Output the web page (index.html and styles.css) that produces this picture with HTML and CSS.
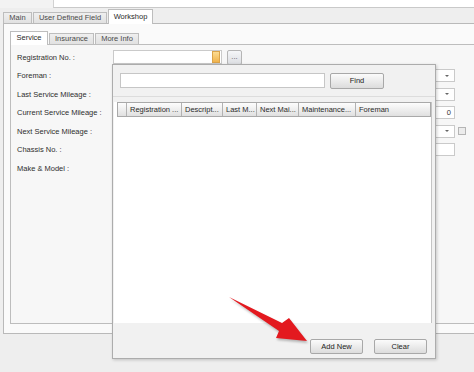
FILE: index.html
```html
<!DOCTYPE html>
<html lang="en">
<head>
    <meta charset="UTF-8">
    <title>Workshop</title>
    <link rel="stylesheet" href="styles.css">
</head>
<body>
    <!-- strip above the tabs -->
    <div class="topbar">
        <div class="topbar-left"></div>
        <div class="topbar-right"></div>
    </div>

    <!-- main tabs -->
    <div class="tabs outer-tabs">
        <div class="tab tab-main">Main</div>
        <div class="tab tab-udf">User Defined Field</div>
        <div class="tab tab-workshop active">Workshop</div>
    </div>

    <div class="outer-panel">
        <!-- sub tabs -->
        <div class="tabs inner-tabs">
            <div class="tab tab-service active">Service</div>
            <div class="tab tab-insurance">Insurance</div>
            <div class="tab tab-more">More Info</div>
        </div>

        <div class="inner-panel">
            <div class="row">
                <div class="label">Registration No. :</div>
                <div class="field field-reg"><span class="dd-btn"></span></div>
                <div class="dots-btn">...</div>
            </div>
            <div class="row">
                <div class="label">Foreman :</div>
                <div class="field wide combo"></div>
            </div>
            <div class="row">
                <div class="label">Last Service Mileage :</div>
                <div class="field wide combo"></div>
            </div>
            <div class="row">
                <div class="label">Current Service Mileage :</div>
                <div class="field wide number">0</div>
            </div>
            <div class="row">
                <div class="label">Next Service Mileage :</div>
                <div class="field wide combo"></div>
                <div class="check"></div>
            </div>
            <div class="row">
                <div class="label">Chassis No. :</div>
                <div class="field wide"></div>
            </div>
            <div class="row">
                <div class="label">Make &amp; Model :</div>
                <div class="field short"></div>
            </div>
        </div>
    </div>

    <!-- lookup popup over the form -->
    <div class="popup">
        <div class="search">
            <div class="search-box"></div>
            <div class="btn btn-find">Find</div>
        </div>
        <div class="grid">
            <div class="grid-head">
                <div class="col col-ind"></div>
                <div class="col col-reg">Registration ...</div>
                <div class="col col-desc">Descript...</div>
                <div class="col col-last">Last M...</div>
                <div class="col col-next">Next Mai...</div>
                <div class="col col-maint">Maintenance...</div>
                <div class="col col-fore">Foreman</div>
            </div>
        </div>
        <div class="popup-foot">
            <div class="btn">Add New</div>
            <div class="btn">Clear</div>
        </div>
    </div>

    <!-- red pointer arrow -->
    <svg class="arrow" width="474" height="372" viewBox="0 0 474 372">
        <polygon points="229,297 282,323 289,318 307,341 276,338 279,331" fill="#e3191f"/>
    </svg>
</body>
</html>
```

FILE: styles.css
```css
* {
    margin: 0;
    padding: 0;
    box-sizing: border-box;
}

body {
    width: 474px;
    height: 372px;
    overflow: hidden;
    position: relative;
    background: #eeeeee;
    font-family: "Liberation Sans", Arial, sans-serif;
    font-size: 7.5px;
    color: #2e2e2e;
}

/* top strip */
.topbar {
    display: flex;
    height: 8px;
}
.topbar-left {
    width: 53px;
    background: #f3f3f3;
}
.topbar-right {
    flex: 1;
    background: #fff;
    border-left: 1px solid #d2d2d2;
    border-bottom: 1px solid #c9c9c9;
}

/* tabs */
.tabs {
    display: flex;
    align-items: flex-end;
}
.tab {
    height: 11px;
    line-height: 10px;
    text-align: center;
    border: 1px solid #bdbdbd;
    border-bottom: none;
    background: linear-gradient(#efefef, #e1e1e1);
    color: #4a4a4a;
    margin-right: 1px;
}
.tab.active {
    height: 15px;
    line-height: 13px;
    background: #fff;
    color: #2a2a2a;
    margin-bottom: -1px;
    position: relative;
    z-index: 2;
}

.outer-tabs {
    height: 15px;
    padding-left: 3px;
}
.tab-main { width: 29px; }
.tab-udf { width: 74px; }
.tab-workshop { width: 45px; margin-right: 0; }

.outer-panel {
    margin-left: 3px;
    margin-right: -20px;
    height: 311px;
    border: 1px solid #b9b9b9;
    background: #fafafa;
    padding: 6px 0 0 6px;
}

.inner-tabs {
    height: 14px;
}
.inner-tabs .tab.active {
    height: 14px;
    line-height: 12px;
}
.tab-service { width: 38px; }
.tab-insurance { width: 45px; }
.tab-more { width: 44px; }

.inner-panel {
    height: 280px;
    border: 1px solid #bdbdbd;
    background: #f7f7f7;
    padding-top: 3px;
}

/* form rows */
.row {
    display: flex;
    align-items: center;
    height: 18.5px;
}
.label {
    width: 102px;
    padding-left: 6px;
    color: #2e2e2e;
}
.field {
    height: 13px;
    background: #fff;
    border: 1px solid #cacaca;
    display: flex;
    align-items: center;
    justify-content: flex-end;
}
.field.wide { width: 342px; }
.field.short { width: 200px; }
.field-reg {
    width: 109px;
    height: 14px;
    padding-right: 1px;
}
.dd-btn {
    width: 8px;
    height: 12px;
    background: linear-gradient(#fcdc92, #f0b34c);
    border: 1px solid #dba44a;
}
.dots-btn {
    margin-left: 5px;
    width: 15px;
    height: 15px;
    border: 1px solid #b5b5b5;
    border-radius: 2px;
    background: linear-gradient(#f5f6f8, #dcdee2);
    text-align: center;
    line-height: 11px;
    color: #555;
}
.combo {
    padding-right: 5px;
}
.combo::after {
    content: "";
    border-left: 2px solid transparent;
    border-right: 2px solid transparent;
    border-top: 2px solid #666;
}
.number {
    padding-right: 3px;
    color: #333;
}
.check {
    margin-left: 3px;
    width: 8px;
    height: 8px;
    border: 1px solid #b5b5b5;
    background: #ececec;
}

/* popup */
.popup {
    position: absolute;
    left: 112px;
    top: 64px;
    width: 324px;
    height: 295px;
    background: #f1f1f1;
    border: 1px solid #acacac;
    box-shadow: 1px 1px 3px rgba(0, 0, 0, 0.2);
    display: flex;
    flex-direction: column;
    z-index: 5;
}
.search {
    display: flex;
    align-items: flex-start;
    height: 32px;
    padding: 8px 0 0 7px;
    border-bottom: 1px solid #dcdcdc;
}
.search-box {
    width: 205px;
    height: 15px;
    background: #fff;
    border: 1px solid #c6c6c6;
}
.btn {
    width: 53px;
    height: 15px;
    border: 1px solid #a8a8a8;
    border-radius: 2px;
    background: linear-gradient(#fbfbfb, #dcdcdc);
    text-align: center;
    line-height: 13px;
    color: #222;
}
.btn-find {
    margin-left: 5px;
    width: 54px;
    height: 16px;
    line-height: 14px;
}

.grid {
    flex: 1;
    margin: 5px 3px 0 1px;
    background: #fff;
    border-right: 1px solid #c4c4c4;
}
.grid-head {
    display: flex;
    height: 15px;
    margin-left: 3px;
    border: 1px solid #a9a9a9;
    background: linear-gradient(#fdfdfd, #e0e0e0);
}
.col {
    border-right: 1px solid #b2b2b2;
    padding-left: 3px;
    line-height: 13px;
    white-space: nowrap;
    overflow: hidden;
    color: #2a2a2a;
}
.col-ind { width: 9px; }
.col-reg { width: 55px; }
.col-desc { width: 41px; }
.col-last { width: 34px; }
.col-next { width: 42px; }
.col-maint { width: 57px; }
.col-fore { flex: 1; border-right: none; }

.popup-foot {
    height: 35px;
    display: flex;
    justify-content: flex-end;
    align-items: flex-start;
    gap: 11px;
    padding: 16px 8px 0 0;
}

/* arrow overlay */
.arrow {
    position: absolute;
    left: 0;
    top: 0;
    z-index: 10;
    pointer-events: none;
    filter: drop-shadow(1px 2px 1px rgba(0, 0, 0, 0.25));
}
```
